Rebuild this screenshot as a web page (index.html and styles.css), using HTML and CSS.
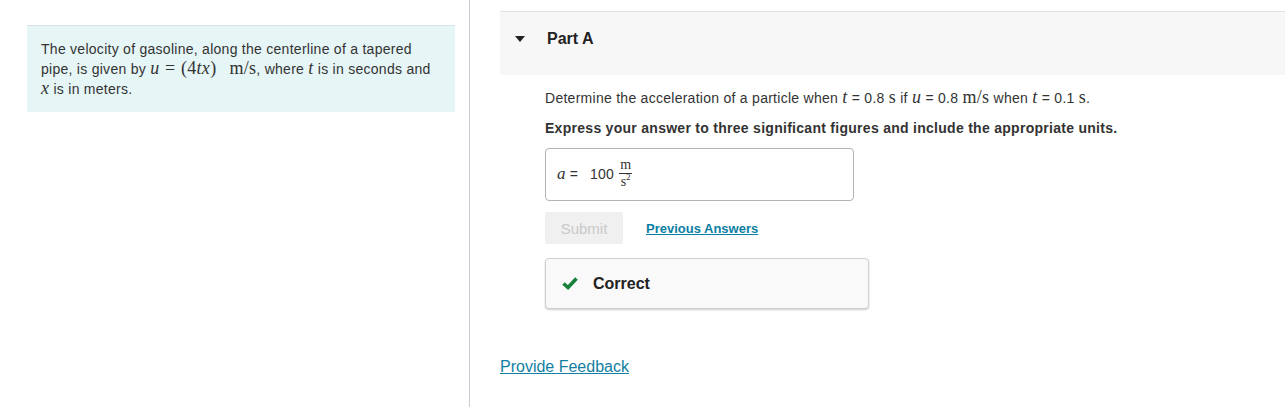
FILE: index.html
```html
<!DOCTYPE html>
<html lang="en">
<head>
    <meta charset="UTF-8">
    <title>Part A</title>
    <link rel="stylesheet" href="styles.css">
</head>
<body>
    <div class="page">
        <div class="intro-col">
            <div class="intro">
                The velocity of gasoline, along the centerline of a tapered pipe, is given by
                <span class="math"><i>u</i><span class="rel">=</span>(4<i>tx</i>)<span class="gap"></span>m/s</span>, where <span class="math"><i>t</i></span> is in seconds and
                <span class="math"><i>x</i></span> is in meters.
            </div>
        </div>
        <div class="part-col">
            <div class="part-head">
                <span class="caret"></span>
                <span class="part-title">Part A</span>
            </div>
            <div class="part-body">
                <p class="problem">Determine the acceleration of a particle when <span class="math"><i>t</i></span> = 0.8 <span class="math">s</span> if <span class="math"><i>u</i></span> = 0.8 <span class="math">m/s</span> when <span class="math"><i>t</i></span> = 0.1 <span class="math">s</span>.</p>
                <p class="instruction">Express your answer to three significant figures and include the appropriate units.</p>
                <div class="answer-box">
                    <span class="var"><i class="math">a</i> =</span>
                    <span class="value">100</span>
                    <span class="frac">
                        <span class="num">m</span>
                        <span class="den">s<sup>2</sup></span>
                    </span>
                </div>
                <div class="actions">
                    <button class="submit" disabled>Submit</button>
                    <a href="#" class="prev-link">Previous Answers</a>
                </div>
                <div class="result">
                    <svg class="check" width="16" height="13" viewBox="0 0 16 13">
                        <polyline points="1.5,6.5 6,10.5 14.5,1.5" fill="none" stroke="#17803a" stroke-width="3.6"/>
                    </svg>
                    <span>Correct</span>
                </div>
            </div>
            <a href="#" class="feedback-link">Provide Feedback</a>
        </div>
    </div>
</body>
</html>
```

FILE: styles.css
```css
body {
    margin: 0;
    font-family: "Liberation Sans", Arial, sans-serif;
    color: #333;
    background: #fff;
}
.page {
    display: flex;
    min-height: 407px;
}
.intro-col {
    width: 470px;
    border-right: 1px solid #c9cdd6;
    padding-top: 25px;
    box-sizing: border-box;
}
.intro {
    margin-left: 27px;
    width: 428px;
    box-sizing: border-box;
    padding: 14px 15px 13px 14px;
    background: #e6f5f6;
    border-top: 1px solid #d8e2e4;
    font-size: 14px;
    line-height: 19px;
    letter-spacing: 0.27px;
}
.math {
    font-family: "Liberation Serif", "Times New Roman", serif;
    font-size: 18px;
    line-height: 1;
    letter-spacing: 0.3px;
}
.math i {
    font-style: italic;
}
.math .rel {
    margin: 0 5.5px;
}
.math .gap {
    display: inline-block;
    width: 13px;
}
.part-col {
    flex: 1;
    padding-top: 11px;
    padding-left: 30px;
}
.part-head {
    display: flex;
    align-items: center;
    height: 64px;
    border-top: 1px solid #e2e2e2;
    background: #f7f7f7;
    padding-bottom: 9px;
    box-sizing: border-box;
}
.caret {
    width: 0;
    height: 0;
    margin-left: 15px;
    margin-right: 22px;
    border-left: 5.5px solid transparent;
    border-right: 5.5px solid transparent;
    border-top: 6px solid #222;
}
.part-title {
    font-size: 16px;
    font-weight: bold;
    color: #222;
}
.part-body {
    padding-left: 45px;
    padding-top: 13px;
}
.problem {
    margin: 0;
    font-size: 14px;
    line-height: 20px;
    letter-spacing: 0.27px;
}
.instruction {
    margin: 10px 0 0;
    font-size: 14px;
    font-weight: bold;
    line-height: 20px;
    letter-spacing: 0.28px;
}
.answer-box {
    display: flex;
    align-items: center;
    width: 309px;
    height: 53px;
    box-sizing: border-box;
    margin-top: 10px;
    padding-left: 11px;
    padding-bottom: 2px;
    border: 1px solid #b3b3b3;
    border-radius: 4px;
    font-size: 14px;
}
.answer-box .var {
    margin-right: 12px;
}
.answer-box .var .math {
    font-size: 17px;
}
.value {
    margin-right: 5px;
    letter-spacing: 0.3px;
}
.frac {
    display: inline-flex;
    flex-direction: column;
    align-items: center;
    font-family: "Liberation Serif", "Times New Roman", serif;
    font-size: 14px;
    line-height: 12px;
}
.frac .num {
    border-bottom: 1px solid #333;
    padding: 0 1px 2px;
}
.frac .den {
    padding-top: 2px;
}
.frac .den sup {
    font-size: 9px;
    line-height: 0;
}
.actions {
    display: flex;
    align-items: center;
    margin-top: 11px;
}
.submit {
    width: 78px;
    height: 32px;
    border: none;
    border-radius: 3px;
    background: #f0f0f0;
    color: #c9c9c9;
    font-family: inherit;
    font-size: 15px;
}
.prev-link {
    margin-left: 23px;
    font-size: 13px;
    font-weight: bold;
    color: #0b7ea3;
}
.result {
    display: flex;
    align-items: center;
    width: 324px;
    height: 51px;
    box-sizing: border-box;
    margin-top: 14px;
    padding-left: 16px;
    background: #f9f9f9;
    border: 1px solid #cfcfcf;
    border-radius: 4px;
    box-shadow: 0 1px 2px rgba(0, 0, 0, 0.2);
    font-size: 16px;
    font-weight: bold;
    color: #222;
}
.check {
    margin-right: 15px;
}
.feedback-link {
    display: inline-block;
    margin-top: 49px;
    font-size: 16px;
    color: #137fa3;
}
```
